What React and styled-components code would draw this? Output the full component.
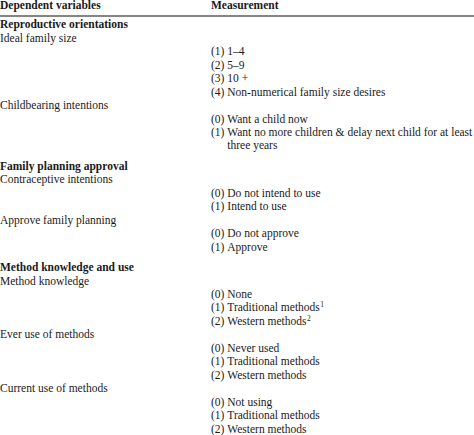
import React from 'react'
import styled, { createGlobalStyle } from 'styled-components'

const Global = createGlobalStyle`
  html, body {
    margin: 0;
    padding: 0;
    background: #fff;
  }
  body {
    font-family: "Liberation Serif", "Times New Roman", serif;
    font-size: 11.5px;
    color: #1a1a1a;
  }
`

const Table = styled.div`
  width: 474px;
  overflow: hidden;
`

const HeadRow = styled.div`
  display: grid;
  grid-template-columns: 211px 1fr;
  font-weight: bold;
  line-height: 11px;
`

const Rule = styled.div`
  height: 2px;
  background: #858585;
  margin: 3.7px 0 1.7px;
`

const Section = styled.div`
  margin-top: ${p => (p.first ? 0 : 7)}px;
`

const Line = styled.div`
  line-height: 13.45px;
  white-space: nowrap;
  font-weight: ${p => (p.bold ? 'bold' : 'normal')};
`

const Options = styled.div`
  margin-left: 211px;
`

const Option = styled.div`
  display: flex;
  line-height: 13.45px;
  white-space: nowrap;
`

const Code = styled.span`
  white-space: pre;
`

const Label = styled.span`
  display: flex;
  flex-direction: column;
`

const Sup = styled.sup`
  font-size: 7.5px;
  line-height: 0;
  vertical-align: 4px;
  margin-left: 0.5px;
`

const sections = [
  {
    title: 'Reproductive orientations',
    vars: [
      {
        name: 'Ideal family size',
        opts: [
          ['(1) ', ['1–4']],
          ['(2) ', ['5–9']],
          ['(3) ', ['10 +']],
          ['(4) ', ['Non-numerical family size desires']],
        ],
      },
      {
        name: 'Childbearing intentions',
        opts: [
          ['(0) ', ['Want a child now']],
          ['(1) ', ['Want no more children & delay next child for at least', 'three years']],
        ],
      },
    ],
  },
  {
    title: 'Family planning approval',
    vars: [
      {
        name: 'Contraceptive intentions',
        opts: [
          ['(0) ', ['Do not intend to use']],
          ['(1) ', ['Intend to use']],
        ],
      },
      {
        name: 'Approve family planning',
        opts: [
          ['(0) ', ['Do not approve']],
          ['(1) ', ['Approve']],
        ],
      },
    ],
  },
  {
    title: 'Method knowledge and use',
    vars: [
      {
        name: 'Method knowledge',
        opts: [
          ['(0) ', ['None']],
          ['(1) ', ['Traditional methods'], '1'],
          ['(2) ', ['Western methods'], '2'],
        ],
      },
      {
        name: 'Ever use of methods',
        opts: [
          ['(0) ', ['Never used']],
          ['(1) ', ['Traditional methods']],
          ['(2) ', ['Western methods']],
        ],
      },
      {
        name: 'Current use of methods',
        opts: [
          ['(0) ', ['Not using']],
          ['(1) ', ['Traditional methods']],
          ['(2) ', ['Western methods']],
        ],
      },
    ],
  },
]

export default function App() {
  return (
    <>
      <Global />
      <Table>
        <HeadRow>
          <span>Dependent variables</span>
          <span>Measurement</span>
        </HeadRow>
        <Rule />
        {sections.map((s, i) => (
          <Section key={s.title} first={i === 0}>
            <Line bold>{s.title}</Line>
            {s.vars.map(v => (
              <div key={v.name}>
                <Line>{v.name}</Line>
                <Options>
                  {v.opts.map(([code, lines, note]) => (
                    <Option key={code}>
                      <Code>{code}</Code>
                      <Label>
                        {lines.map((l, k) => (
                          <span key={k}>
                            {l}
                            {note && k === lines.length - 1 && <Sup>{note}</Sup>}
                          </span>
                        ))}
                      </Label>
                    </Option>
                  ))}
                </Options>
              </div>
            ))}
          </Section>
        ))}
      </Table>
    </>
  )
}
